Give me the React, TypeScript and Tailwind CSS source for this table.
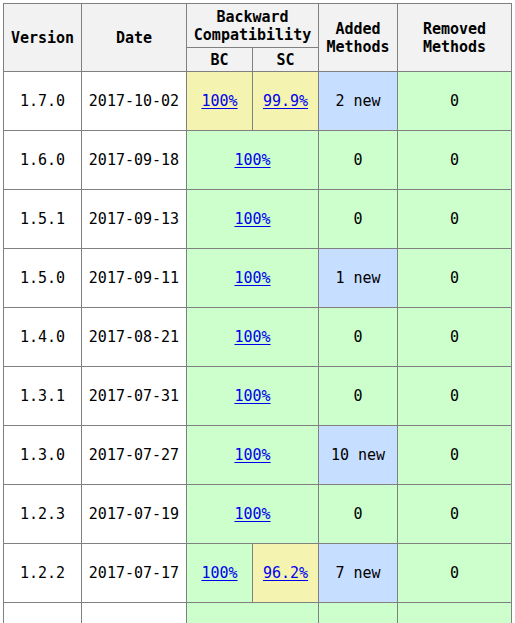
type Row = {
  version: string;
  date: string;
  bc: string;
  sc?: string;
  bcWarn?: boolean;
  scWarn?: boolean;
  added: string;
  removed: string;
};

const rows: Row[] = [
  { version: "1.7.0", date: "2017-10-02", bc: "100%", sc: "99.9%", bcWarn: true, scWarn: true, added: "2 new", removed: "0" },
  { version: "1.6.0", date: "2017-09-18", bc: "100%", added: "0", removed: "0" },
  { version: "1.5.1", date: "2017-09-13", bc: "100%", added: "0", removed: "0" },
  { version: "1.5.0", date: "2017-09-11", bc: "100%", added: "1 new", removed: "0" },
  { version: "1.4.0", date: "2017-08-21", bc: "100%", added: "0", removed: "0" },
  { version: "1.3.1", date: "2017-07-31", bc: "100%", added: "0", removed: "0" },
  { version: "1.3.0", date: "2017-07-27", bc: "100%", added: "10 new", removed: "0" },
  { version: "1.2.3", date: "2017-07-19", bc: "100%", added: "0", removed: "0" },
  { version: "1.2.2", date: "2017-07-17", bc: "100%", sc: "96.2%", scWarn: true, added: "7 new", removed: "0" },
  // next row only shows its top edge in the viewport
  { version: "", date: "", bc: "", added: "", removed: "" },
];

const td = "border border-[#808080] text-center align-middle px-1";
const th = "border border-[#808080] bg-[#f2f2f2] text-center align-middle font-bold px-1";

function Link({ children }: { children: string }) {
  if (!children) return null;
  return <a href="#" className="text-[#0000ee] underline underline-offset-2">{children}</a>;
}

export default function App() {
  return (
    <div className="pl-[3px] pt-[3px] bg-white min-h-screen text-black" style={{ fontFamily: '"DejaVu Sans Mono", monospace' }}>
      <table className="table-fixed border-collapse w-[508px] text-[15px] leading-[18px]">
        <colgroup>
          <col className="w-[78px]" />
          <col className="w-[105px]" />
          <col className="w-[66px]" />
          <col className="w-[66px]" />
          <col className="w-[79px]" />
          <col className="w-[114px]" />
        </colgroup>
        <thead>
          <tr className="h-[44px]">
            <th rowSpan={2} className={th}>Version</th>
            <th rowSpan={2} className={th}>Date</th>
            <th colSpan={2} className={th}>Backward<br />Compatibility</th>
            <th rowSpan={2} className={th}>Added<br />Methods</th>
            <th rowSpan={2} className={th}>Removed<br />Methods</th>
          </tr>
          <tr className="h-[24px]">
            <th className={th}>BC</th>
            <th className={th}>SC</th>
          </tr>
        </thead>
        <tbody>
          {rows.map((r, i) => (
            <tr key={i} className="h-[59px]">
              <td className={td}>{r.version}</td>
              <td className={td}>{r.date}</td>
              {r.sc ? (
                <>
                  <td className={`${td} ${r.bcWarn ? "bg-[#f4f4b0]" : "bg-[#ccffcc]"}`}><Link>{r.bc}</Link></td>
                  <td className={`${td} ${r.scWarn ? "bg-[#f4f4b0]" : "bg-[#ccffcc]"}`}><Link>{r.sc}</Link></td>
                </>
              ) : (
                <td colSpan={2} className={`${td} bg-[#ccffcc]`}><Link>{r.bc}</Link></td>
              )}
              <td className={`${td} ${r.added === "0" || r.added === "" ? "bg-[#ccffcc]" : "bg-[#c6deff]"}`}>{r.added}</td>
              <td className={`${td} bg-[#ccffcc]`}>{r.removed}</td>
            </tr>
          ))}
        </tbody>
      </table>
    </div>
  );
}
